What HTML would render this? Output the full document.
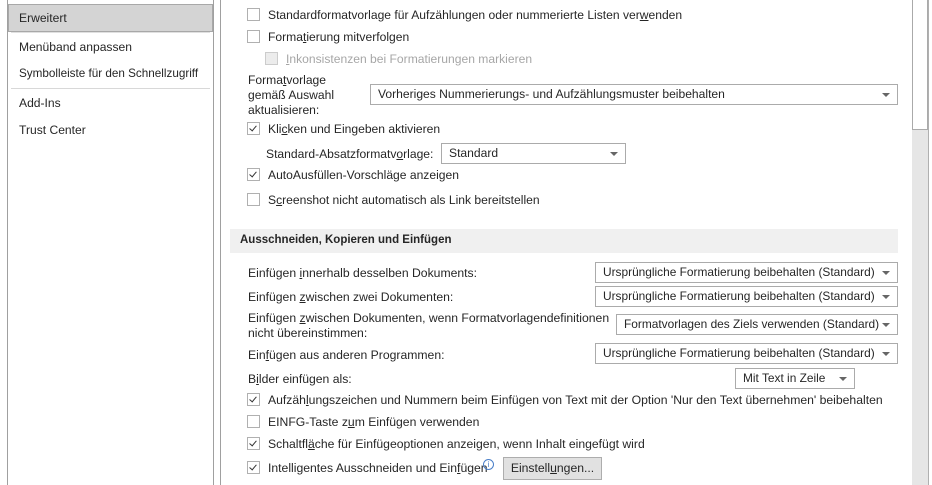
<!DOCTYPE html>
<html><head><meta charset="utf-8"><style>
*{margin:0;padding:0;box-sizing:border-box}
body{width:932px;height:485px;background:#fff;font-family:"Liberation Sans",sans-serif;font-size:12.1px;color:#262626;position:relative;overflow:hidden}
.a{position:absolute;white-space:nowrap}
.cb{position:absolute;width:13px;height:13px;border:1px solid #b0b0b0;background:#fff}
.cb.on::after{content:"";position:absolute;left:3px;top:1px;width:3px;height:6px;border:solid #333;border-width:0 1.3px 1.3px 0;transform:rotate(40deg)}
.cb.dis{background:#ececec;border-color:#ccc}
.dd{position:absolute;border:1px solid #ababab;background:#fff;padding-left:7px;line-height:19px;overflow:hidden}
.dd::after{content:"";position:absolute;right:7px;top:8px;border:4px solid transparent;border-top:4px solid #666;border-bottom:0}
.sm{font-size:12.2px}
.dd.sm{font-size:11.9px}
u{text-decoration:underline}
</style></head><body>
<div class="a" style="left:7px;top:0;width:1px;height:485px;background:#a0a0a0"></div>
<div class="a" style="left:213px;top:0;width:1px;height:485px;background:#a0a0a0"></div>
<div class="a" style="left:220px;top:0;width:1px;height:485px;background:#a0a0a0"></div>
<div class="a" style="left:8px;top:4px;width:205px;height:28px;background:#d4d4d4;border:1px solid #a8a8a8"></div>
<div class="a" style="left:11px;top:32px;width:199px;height:1px;background:#e0e0e0"></div>
<div class="a" style="left:11px;top:88px;width:199px;height:1px;background:#d8d8d8"></div>
<div class="a" style="left:19px;top:11px">Erweitert</div>
<div class="a" style="left:19px;top:40px">Menüband anpassen</div>
<div class="a" style="left:19px;top:67px;font-size:11.7px">Symbolleiste für den Schnellzugriff</div>
<div class="a" style="left:19px;top:96px">Add-Ins</div>
<div class="a" style="left:19px;top:123px">Trust Center</div>

<div class="a" style="left:912px;top:0;width:16px;height:485px;background:#e6e6e6"></div>
<div class="a" style="left:912px;top:-1px;width:16px;height:131px;background:#fff;border:1px solid #aaa"></div>
<div class="a" style="left:928px;top:0;width:1px;height:485px;background:#b0b0b0"></div>

<div class="cb" style="left:247px;top:8px"></div><div class="a" style="left:268px;top:8px">Standardformatvorlage für Aufzählungen oder nummerierte Listen ver<u>w</u>enden</div>
<div class="cb" style="left:247px;top:30px"></div><div class="a" style="left:268px;top:30px">Forma<u>t</u>ierung mitverfolgen</div>
<div class="cb dis" style="left:265px;top:52px"></div><div class="a" style="left:286px;top:52px;color:#a6a6a6"><u>I</u>nkonsistenzen bei Formatierungen markieren</div>
<div class="a" style="left:248px;top:73px;line-height:15px">Forma<u>t</u>vorlage<br>gemäß Auswahl<br>aktualisieren:</div>
<div class="dd" style="left:370px;top:84px;width:528px;height:21px">Vorheriges Nummerierungs- und Aufzählungsmuster beibehalten</div>
<div class="cb on" style="left:247px;top:122px"></div><div class="a" style="left:268px;top:122px">Kli<u>c</u>ken und Eingeben aktivieren</div>
<div class="a" style="left:266px;top:147px">Standard-Absatzformatv<u>o</u>rlage:</div>
<div class="dd" style="left:441px;top:143px;width:185px;height:21px">Standard</div>
<div class="cb on" style="left:247px;top:168px"></div><div class="a" style="left:268px;top:168px">AutoAusfüllen-Vorschläge anzeigen</div>
<div class="cb" style="left:247px;top:193px"></div><div class="a" style="left:268px;top:193px">S<u>c</u>reenshot nicht automatisch als Link bereitstellen</div>

<div class="a" style="left:230px;top:229px;width:668px;height:24px;background:#f0f0f0"></div>
<div class="a" style="left:240px;top:234px;font-weight:bold;font-size:11.5px">Ausschneiden, Kopieren und Einfügen</div>

<div class="a sm" style="left:248px;top:266px">Einfügen <u>i</u>nnerhalb desselben Dokuments:</div>
<div class="dd sm" style="left:595px;top:262px;width:303px;height:21px">Ursprüngliche Formatierung beibehalten (Standard)</div>
<div class="a sm" style="left:248px;top:290px">Einfügen <u>z</u>wischen zwei Dokumenten:</div>
<div class="dd sm" style="left:595px;top:286px;width:303px;height:21px">Ursprüngliche Formatierung beibehalten (Standard)</div>
<div class="a sm" style="left:248px;top:311px;line-height:15px">Einfügen <u>z</u>wischen Dokumenten, wenn Formatvorlagendefinitionen<br>nicht übereinstimmen:</div>
<div class="dd sm" style="left:616px;top:314px;width:282px;height:21px">Formatvorlagen des Ziels verwenden (Standard)</div>
<div class="a sm" style="left:248px;top:348px">Ein<u>f</u>ügen aus anderen Programmen:</div>
<div class="dd sm" style="left:595px;top:343px;width:303px;height:21px">Ursprüngliche Formatierung beibehalten (Standard)</div>
<div class="a sm" style="left:248px;top:372px">B<u>i</u>lder einfügen als:</div>
<div class="dd sm" style="left:735px;top:368px;width:120px;height:21px">Mit Text in Zeile</div>
<div class="cb on" style="left:247px;top:393px"></div><div class="a sm" style="left:268px;top:393px">Aufzäh<u>l</u>ungszeichen und Nummern beim Einfügen von Text mit der Option 'Nur den Text übernehmen' beibehalten</div>
<div class="cb" style="left:247px;top:415px"></div><div class="a sm" style="left:268px;top:415px">EINFG-Taste z<u>u</u>m Einfügen verwenden</div>
<div class="cb on" style="left:247px;top:437px"></div><div class="a sm" style="left:268px;top:437px">Schaltfl<u>ä</u>che für Einfügeoptionen anzeigen, wenn Inhalt eingefügt wird</div>
<div class="cb on" style="left:247px;top:461px"></div><div class="a sm" style="left:268px;top:461px">Intelligentes Ausschneiden und Ein<u>f</u>ügen</div>
<div class="a" style="left:483px;top:459px;width:11px;height:11px;border:1px solid #4a7fc8;border-radius:50%;font-size:8px;color:#4a7fc8;text-align:center;line-height:9px">i</div>
<div class="a sm" style="left:503px;top:457px;width:99px;height:23px;background:#e1e1e1;border:1px solid #adadad;text-align:center;line-height:21px">Einstell<u>u</u>ngen...</div>
</body></html>
